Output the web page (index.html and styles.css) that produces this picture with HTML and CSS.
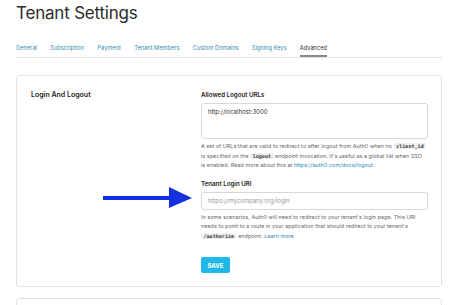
FILE: index.html
```html
<!DOCTYPE html>
<html lang="en">
<head>
  <meta charset="UTF-8">
  <title>Tenant Settings</title>
  <link rel="stylesheet" href="styles.css">
</head>
<body>
  <div class="page">
    <h1>Tenant Settings</h1>

    <nav class="tabs">
      <a class="tab">General</a>
      <a class="tab">Subscription</a>
      <a class="tab">Payment</a>
      <a class="tab">Tenant Members</a>
      <a class="tab">Custom Domains</a>
      <a class="tab">Signing Keys</a>
      <a class="tab active">Advanced</a>
    </nav>

    <section class="card">
      <div class="card-side">
        <h3 class="card-title">Login And Logout</h3>
        <!-- annotation arrow pointing at the login URI field -->
        <svg class="arrow" width="90" height="22" viewBox="0 0 90 22">
          <rect x="0" y="9" width="68" height="4" fill="#1530e0"/>
          <polygon points="66,0 89,11 66,21" fill="#1530e0"/>
        </svg>
      </div>

      <div class="card-body">
        <div class="field">
          <label class="label">Allowed Logout URLs</label>
          <div class="textarea">http://localhost:3000</div>
          <p class="help">A set of URLs that are valid to redirect to after logout from Auth0 when no <code>client_id</code> is specified on the <code>logout</code> endpoint invocation. It's useful as a global list when SSO is&nbsp;enabled. Read more about this at <a href="#">https://auth0.com/docs/logout</a></p>
        </div>

        <div class="field">
          <label class="label">Tenant Login URI</label>
          <div class="input placeholder">https://mycompany.org/login</div>
          <p class="help">In some scenarios, Auth0 will need to redirect to your tenant's login page. This URI needs to point to a route in your application that should redirect to your tenant's <code>/authorize</code> endpoint. <a href="#">Learn more</a></p>
        </div>

        <button class="btn">SAVE</button>
      </div>
    </section>

    <section class="card card-next"></section>
  </div>
</body>
</html>
```

FILE: styles.css
```css
body {
  margin: 0;
  font-family: 'Inter', 'Liberation Sans', sans-serif;
  color: #333;
  background: #fff;
  overflow: hidden;
}
.page {
  padding: 0 32px 0 16px;
}
h1 {
  font-size: 17px;
  font-weight: 400;
  color: #2b2b2b;
  margin: 3px 0 0;
  line-height: 20px;
  letter-spacing: -0.2px;
}
.tabs {
  display: flex;
  gap: 13.3px;
  margin-top: 18px;
  border-bottom: 1px solid #e3e3e3;
  height: 16px;
}
.tab {
  font-size: 5.7px;
  color: #3a8bb0;
  line-height: 13px;
  height: 14px;
}
.tab.active {
  color: #333;
  border-bottom: 2px solid #888;
}
.card {
  margin-top: 17px;
  border: 1px solid #e2e2e2;
  border-radius: 3px;
  display: grid;
  grid-template-columns: 170px 1fr;
  padding: 14px 13px 13px 14px;
}
.card-side {
  position: relative;
}
.card-title {
  font-size: 7px;
  font-weight: 600;
  color: #222;
  margin: 0;
  line-height: 9px;
}
.arrow {
  position: absolute;
  left: 72px;
  top: 97px;
}
.label {
  display: block;
  font-size: 6.2px;
  font-weight: 600;
  color: #222;
  line-height: 9px;
  margin-bottom: 4px;
}
.textarea,
.input {
  border: 1px solid #d8d8d8;
  border-radius: 3px;
  font-size: 6px;
  color: #333;
  padding: 0 6px;
}
.textarea {
  height: 34px;
  line-height: 16px;
}
.input {
  height: 16px;
  line-height: 16px;
}
.placeholder {
  color: #999;
}
.help {
  font-size: 5.4px;
  color: #666;
  line-height: 9.5px;
  margin: 3px 0 0;
  letter-spacing: 0.05px;
}
.help code {
  font-family: 'DejaVu Sans Mono', monospace;
  font-weight: 700;
  font-size: 5px;
  background: #eee;
  padding: 0 2.5px;
  border-radius: 2px;
  color: #333;
  line-height: 6px;
}
.help a {
  color: #2d8bbd;
  text-decoration: none;
}
.field + .field {
  margin-top: 8px;
}
.btn {
  display: block;
  margin-top: 16px;
  background: #1fb7ea;
  border: none;
  border-radius: 2px;
  color: #fff;
  font-family: inherit;
  font-weight: 700;
  font-size: 6px;
  width: 29px;
  height: 16px;
  padding: 0;
}
.card-next {
  margin-top: 11px;
  height: 20px;
  padding: 0;
}
```
